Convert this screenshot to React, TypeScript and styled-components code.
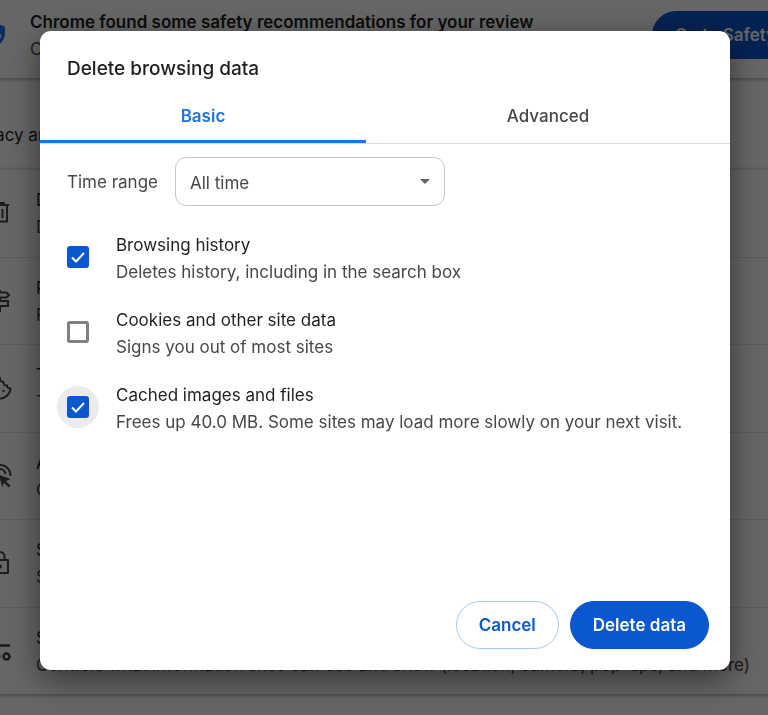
import React, { useState } from "react";
import styled, { createGlobalStyle, css } from "styled-components";

const color = {
  blue: "#0b57d0",
  tab: "#1a73e8",
  text: "#1f1f1f",
  muted: "#474747",
  line: "#dadce0",
  faint: "#e6e6e6",
};

const GlobalStyle = createGlobalStyle`
  *, *::before, *::after { box-sizing: border-box; }
  body {
    margin: 0;
    background: #fff;
    color: ${color.text};
    font: 400 17px/27px Inter, "Liberation Sans", sans-serif;
    overflow: hidden;
  }
  button, select { font: inherit; }
`;

const Page = styled.div`
  height: 100vh;
  overflow: hidden;
`;

const Banner = styled.section`
  display: flex;
  align-items: flex-start;
  gap: 24px;
  height: 78px;
  padding-top: 9px;
  box-shadow: 0 1px 4px rgba(0, 0, 0, 0.4);
  white-space: nowrap;
`;

const BannerIcon = styled.span`
  display: flex;
  flex: none;
  width: 28px;
  margin: 12px 0 0 -22px;
`;

const BannerText = styled.div`
  flex: 1;
  min-width: 0;
  color: ${color.muted};

  strong {
    display: block;
    color: ${color.text};
    font-weight: 600;
  }
`;

const pill = css`
  height: 48px;
  padding: 0 22px;
  border: 1px solid ${color.blue};
  border-radius: 24px;
  background: ${color.blue};
  color: #fff;
  font-weight: 600;
  white-space: nowrap;
`;

const SafetyButton = styled.button`
  ${pill}
  flex: none;
  margin: 2px -88px 0 0;
`;

const SectionTitle = styled.h2`
  margin: 44px 0 20px -36px;
  font-size: 17px;
  font-weight: 400;
  line-height: 27px;
`;

const Card = styled.ul`
  display: grid;
  grid-auto-rows: 1fr;
  height: 525px;
  margin: 0;
  padding: 0;
  list-style: none;
  box-shadow: 0 1px 4px rgba(0, 0, 0, 0.4);
`;

const CardRow = styled.li`
  display: flex;
  align-items: center;
  gap: 22px;
  border-top: 1px solid ${color.faint};
  white-space: nowrap;

  svg {
    flex: none;
    margin-left: -14px;
    color: ${color.muted};
  }
`;

const RowText = styled.div`
  padding-top: 2px;
  color: ${color.muted};

  strong {
    display: block;
    color: ${color.text};
    font-weight: 400;
  }
`;

const Backdrop = styled.div`
  position: fixed;
  inset: 0;
  display: flex;
  padding: 31px 38px 45px 40px;
  background: rgba(0, 0, 0, 0.6);
`;

const Dialog = styled.section`
  display: flex;
  flex: 1;
  flex-direction: column;
  border-radius: 11px;
  background: #fff;
  box-shadow: 0 10px 32px rgba(0, 0, 0, 0.5);
  overflow: hidden;
`;

const DialogTitle = styled.h1`
  margin: 0;
  padding: 24px 27px 0;
  font-size: 19px;
  font-weight: 500;
  line-height: 28px;
`;

const Tabs = styled.div`
  display: flex;
  margin-top: 6px;
  border-bottom: 1px solid ${color.line};
`;

const Tab = styled.button<{ $active: boolean }>`
  flex: ${(p) => (p.$active ? "0 0 326px" : "1")};
  height: 54px;
  margin: 0;
  padding: 4px 0 0;
  border: 0;
  border-bottom: 3px solid ${(p) => (p.$active ? color.tab : "transparent")};
  background: none;
  color: ${(p) => (p.$active ? color.tab : color.muted)};
  font-weight: ${(p) => (p.$active ? 600 : 500)};
`;

const RangeRow = styled.div`
  display: flex;
  align-items: center;
  gap: 17px;
  padding: 13px 27px 0;
  color: ${color.muted};

  label { padding-top: 2px; }
`;

const SelectBox = styled.div`
  display: grid;
  width: 270px;
  align-items: center;

  > * { grid-area: 1 / 1; }

  svg {
    justify-self: end;
    margin-right: 15px;
    pointer-events: none;
  }
`;

const Select = styled.select`
  appearance: none;
  height: 49px;
  padding: 4px 40px 0 14px;
  border: 1px solid #c7c7c7;
  border-radius: 11px;
  background: #fff;
  color: ${color.muted};
`;

const Options = styled.div`
  display: flex;
  flex: 1;
  flex-direction: column;
  gap: 17px;
  padding: 22px 17px 0;
`;

const Option = styled.label`
  display: flex;
  align-items: center;
  gap: 17px;
`;

const CheckHalo = styled.span<{ $focused: boolean }>`
  display: grid;
  flex: none;
  width: 42px;
  height: 42px;
  place-items: center;
  border-radius: 50%;
  background: ${(p) => (p.$focused ? "#ebebeb" : "transparent")};

  > * { grid-area: 1 / 1; }
  svg { pointer-events: none; }
`;

const CheckInput = styled.input`
  appearance: none;
  width: 22px;
  height: 22px;
  margin: 0;
  border: 3px solid #808080;
  border-radius: 3px;

  &:checked {
    border-color: ${color.blue};
    background: ${color.blue};
  }
`;

const OptionText = styled.span`
  padding-top: 4px;
  color: ${color.muted};

  strong {
    display: block;
    color: ${color.text};
    font-weight: 400;
  }
`;

const Actions = styled.footer`
  display: flex;
  justify-content: flex-end;
  gap: 11px;
  padding: 0 21px 21px;
`;

const CancelButton = styled.button`
  ${pill}
  border-color: #a8c7fa;
  background: #fff;
  color: ${color.blue};
`;

const DeleteButton = styled.button`
  ${pill}
`;

const iconProps = {
  width: 28,
  height: 28,
  viewBox: "0 0 28 28",
  fill: "none",
  stroke: "currentColor",
  strokeWidth: 2,
  "aria-hidden": true,
} as const;

const TrashIcon = () => (
  <svg {...iconProps}>
    <path d="M5 6h18M10 6V4h8v2M7 7v15.500h14V7M11.500 10v9M16.500 10v9" />
  </svg>
);

const SignpostIcon = () => (
  <svg {...iconProps}>
    <path d="M14 3v3M14 10.500v3.500M14 19v6M6 5.500h14.500l2.500 2.500-2.500 2.500H6zM22 14H7.500L5 16.500 7.500 19H22z" />
  </svg>
);

const CookieIcon = () => (
  <svg {...iconProps}>
    <path d="M14 4a10.200 10.200 0 1 0 10.400 10.500c-2 .2-3.400-1-3.400-3-2.400.2-3.700-1.100-3.500-3.400C15.300 7.800 14 6.300 14 4z" />
    <g fill="currentColor" stroke="none">
      <circle cx="10" cy="11" r="1.500" />
      <circle cx="11" cy="18" r="1.500" />
      <circle cx="17.500" cy="17" r="1.200" />
    </g>
  </svg>
);

const AdsIcon = () => (
  <svg {...iconProps}>
    <path d="M11 23.500A10.500 10.500 0 1 1 24.500 14M11.500 18.500A6 6 0 1 1 19.500 12" />
    <path d="M13 13l11.500 4-4.500 2 4.500 4.700-1.800 1.800-4.700-4.700-1.800 4.400z" fill="currentColor" stroke="none" />
  </svg>
);

const LockIcon = () => (
  <svg {...iconProps}>
    <path d="M6 11h16v13H6zM9.500 11V7.500a4.500 4.500 0 0 1 9 0V11" strokeLinejoin="round" />
    <circle cx="14" cy="17.500" r="2" fill="currentColor" stroke="none" />
  </svg>
);

const TuneIcon = () => (
  <svg {...iconProps} strokeWidth={2.5}>
    <circle cx="7.500" cy="8.500" r="3" />
    <path d="M13.500 8.500H24M4 19.500h10.500" />
    <circle cx="20.500" cy="19.500" r="3" />
  </svg>
);

const ShieldIcon = () => (
  <svg width="28" height="28" viewBox="0 0 28 28" aria-hidden>
    <path d="M14 1l13 4.500V12c0 7-5 12.500-13 15C6 24.500 1 19 1 12V5.500z" fill={color.tab} />
    <path d="M14 13.500h9.500c-.7 5-4 8.500-9.500 10.500z" fill="#fff" />
  </svg>
);

const rows = [
  { Icon: TrashIcon, title: "Delete browsing data", detail: "Delete history, cookies, cache, and more" },
  { Icon: SignpostIcon, title: "Privacy Guide", detail: "Review key privacy and security controls" },
  { Icon: CookieIcon, title: "Third-party cookies", detail: "Third-party cookies are blocked in Incognito mode" },
  { Icon: AdsIcon, title: "Ads privacy", detail: "Customize the info used by sites to show you ads" },
  { Icon: LockIcon, title: "Security", detail: "Safe Browsing and other security settings" },
  {
    Icon: TuneIcon,
    title: "Site settings",
    detail: "Controls what information sites can use and show (location, camera, pop-ups, and more)",
  },
];

const options = [
  { id: "history", title: "Browsing history", detail: "Deletes history, including in the search box" },
  { id: "cookies", title: "Cookies and other site data", detail: "Signs you out of most sites" },
  {
    id: "cache",
    title: "Cached images and files",
    detail: "Frees up 40.0 MB. Some sites may load more slowly on your next visit.",
  },
];

export default function App() {
  const [selected, setSelected] = useState<string[]>(["history", "cache"]);
  const [focused, setFocused] = useState("cache");

  const toggle = (id: string) => {
    setFocused(id);
    setSelected((ids) => (ids.includes(id) ? ids.filter((i) => i !== id) : [...ids, id]));
  };

  return (
    <>
      <GlobalStyle />
      <Page>
        <Banner>
          <BannerIcon>
            <ShieldIcon />
          </BannerIcon>
          <BannerText>
            <strong>Chrome found some safety recommendations for your review</strong>
            Check your settings
          </BannerText>
          <SafetyButton type="button">Go to Safety Check</SafetyButton>
        </Banner>
        <SectionTitle>Privacy and security</SectionTitle>
        <Card>
          {rows.map(({ Icon, title, detail }) => (
            <CardRow key={title}>
              <Icon />
              <RowText>
                <strong>{title}</strong>
                {detail}
              </RowText>
            </CardRow>
          ))}
        </Card>
      </Page>
      <Backdrop>
        <Dialog role="dialog" aria-modal="true" aria-labelledby="dialog-title">
          <DialogTitle id="dialog-title">Delete browsing data</DialogTitle>
          <Tabs role="tablist">
            <Tab type="button" role="tab" aria-selected $active>
              Basic
            </Tab>
            <Tab type="button" role="tab" aria-selected={false} $active={false}>
              Advanced
            </Tab>
          </Tabs>
          <RangeRow>
            <label htmlFor="range">Time range</label>
            <SelectBox>
              <Select id="range" defaultValue="All time">
                <option>Last hour</option>
                <option>Last 24 hours</option>
                <option>All time</option>
              </Select>
              <svg width="10" height="6" viewBox="0 0 10 6" aria-hidden>
                <path d="M0 0h10L5 5z" fill="#5f6368" />
              </svg>
            </SelectBox>
          </RangeRow>
          <Options>
            {options.map(({ id, title, detail }) => (
              <Option key={id}>
                <CheckHalo $focused={focused === id}>
                  <CheckInput type="checkbox" checked={selected.includes(id)} onChange={() => toggle(id)} />
                  {selected.includes(id) && (
                    <svg width="16" height="16" viewBox="0 0 16 16" aria-hidden>
                      <path d="M2 8.500l4 4 8-8.500" fill="none" stroke="#fff" strokeWidth="2" />
                    </svg>
                  )}
                </CheckHalo>
                <OptionText>
                  <strong>{title}</strong>
                  {detail}
                </OptionText>
              </Option>
            ))}
          </Options>
          <Actions>
            <CancelButton type="button">Cancel</CancelButton>
            <DeleteButton type="button">Delete data</DeleteButton>
          </Actions>
        </Dialog>
      </Backdrop>
    </>
  );
}
